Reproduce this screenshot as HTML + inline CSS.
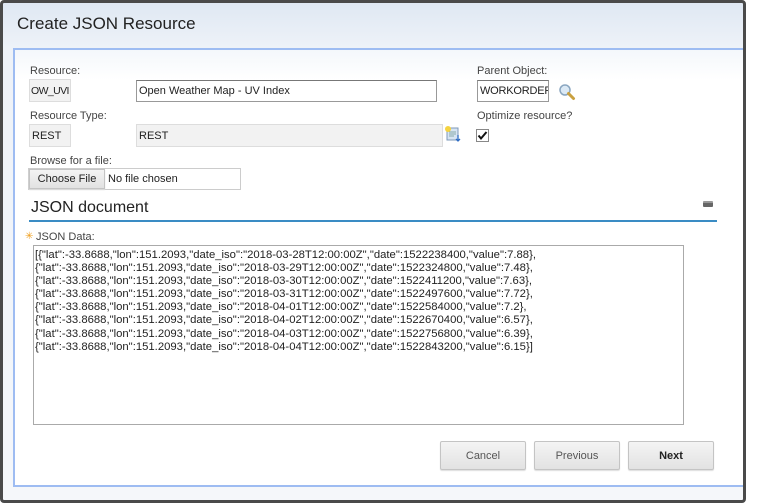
<!DOCTYPE html>
<html><head><meta charset="utf-8"><style>
*{box-sizing:border-box;margin:0;padding:0}
body{width:768px;height:503px;background:#fff;font-family:"Liberation Sans",Arial,sans-serif;color:#333;position:relative;overflow:hidden}
.a{position:absolute}
#dlg{left:0;top:0;width:746px;height:503px;border:3px solid #4a4a4a;border-radius:4px;background:linear-gradient(#dfe8f3,#eef2f8 45px,#f5f7fa);}
#panel{left:13px;top:48px;width:730px;height:439px;border:2px solid #9ebcf2;border-right:none;background:linear-gradient(#f4f7fb,#fff 30px)}
.lbl{font-size:11px;color:#444}
.in{font-size:11px;color:#222;border:1px solid #ddd;background:#f2f2f2;padding-left:2px;display:flex;align-items:center;white-space:nowrap;overflow:hidden}
.in2{background:#fff;border:1px solid #999;border-top-color:#777}
.btn{border:1px solid #c4c4c4;border-radius:2px;background:linear-gradient(#f4f4f4,#e2e2e2);font-size:11px;color:#555;display:flex;align-items:center;justify-content:center;box-shadow:0 1px 1px #ddd}
#ta{left:33px;top:245px;width:651px;height:180px;border:1px solid #aaa;background:#fff;font-size:11.3px;line-height:13.1px;color:#222;padding:3px 1px;white-space:pre;letter-spacing:0}
</style></head><body>
<div id="dlg" class="a"></div>
<div class="a" style="left:17px;top:14px;font-size:17px;color:#222">Create JSON Resource</div>
<div id="panel" class="a"></div>

<div class="a lbl" style="left:30px;top:65px">Resource:</div>
<div class="a in" style="left:29px;top:79px;width:42px;height:23px;padding-left:1px;font-size:10.5px;letter-spacing:-0.6px">OW_UVI</div>
<div class="a in in2" style="left:136px;top:80px;width:301px;height:22px">Open Weather Map - UV Index</div>
<div class="a lbl" style="left:477px;top:65px">Parent Object:</div>
<div class="a in in2" style="left:477px;top:80px;width:72px;height:22px;letter-spacing:-0.2px">WORKORDER</div>
<svg class="a" style="left:558px;top:83px" width="18" height="18" viewBox="0 0 18 18"><circle cx="7" cy="7" r="5" fill="#dbe9f5" stroke="#8aa6c0" stroke-width="1.5"/><path d="M10.5 10.5L15.5 15.5" stroke="#c9a040" stroke-width="3" stroke-linecap="round"/></svg>

<div class="a lbl" style="left:30px;top:110px">Resource Type:</div>
<div class="a in" style="left:29px;top:124px;width:42px;height:23px">REST</div>
<div class="a in" style="left:136px;top:124px;width:307px;height:23px">REST</div>
<svg class="a" style="left:444px;top:125px" width="18" height="18" viewBox="0 0 18 18"><rect x="3" y="3" width="11" height="12" fill="#d6e4f3" stroke="#7d98b8"/><path d="M5 7h7M5 9h7M5 11h5" stroke="#8aa" stroke-width="1"/><circle cx="4" cy="4" r="3" fill="#f5d340"/><path d="M14 10v6M12 14l2 2 2-2" stroke="#2d6bc4" stroke-width="1.3" fill="none"/></svg>
<div class="a lbl" style="left:477px;top:110px">Optimize resource?</div>
<div class="a" style="left:476px;top:129px;width:13px;height:13px;border:1px solid #888;background:#fff"><svg width="11" height="11" viewBox="0 0 11 11" style="display:block"><path d="M1.5 5.5L4 8.5L9.5 2" stroke="#111" stroke-width="2" fill="none"/></svg></div>

<div class="a lbl" style="left:30px;top:155px">Browse for a file:</div>
<div class="a" style="left:28px;top:168px;width:213px;height:22px;border:1px solid #ccc;background:#fff"></div>
<div class="a btn" style="left:29px;top:169px;width:76px;height:20px;color:#222;border-radius:0">Choose File</div>
<div class="a" style="left:108px;top:173px;font-size:11px;color:#222">No file chosen</div>

<div class="a" style="left:31px;top:199px;font-size:16px;color:#222">JSON document</div>
<div class="a" style="left:703px;top:201px;width:10px;height:6px;background:#666;border-radius:1px;border-top:2px solid #999"></div>
<div class="a" style="left:29px;top:220px;width:688px;height:1.5px;background:#3a8cc4"></div>

<div class="a" style="left:25px;top:231px;font-size:10px;color:#f0a020">✳</div>
<div class="a lbl" style="left:36px;top:231px">JSON Data:</div>
<div id="ta" class="a">[{"lat":-33.8688,"lon":151.2093,"date_iso":"2018-03-28T12:00:00Z","date":1522238400,"value":7.88},
{"lat":-33.8688,"lon":151.2093,"date_iso":"2018-03-29T12:00:00Z","date":1522324800,"value":7.48},
{"lat":-33.8688,"lon":151.2093,"date_iso":"2018-03-30T12:00:00Z","date":1522411200,"value":7.63},
{"lat":-33.8688,"lon":151.2093,"date_iso":"2018-03-31T12:00:00Z","date":1522497600,"value":7.72},
{"lat":-33.8688,"lon":151.2093,"date_iso":"2018-04-01T12:00:00Z","date":1522584000,"value":7.2},
{"lat":-33.8688,"lon":151.2093,"date_iso":"2018-04-02T12:00:00Z","date":1522670400,"value":6.57},
{"lat":-33.8688,"lon":151.2093,"date_iso":"2018-04-03T12:00:00Z","date":1522756800,"value":6.39},
{"lat":-33.8688,"lon":151.2093,"date_iso":"2018-04-04T12:00:00Z","date":1522843200,"value":6.15}]</div>

<div class="a btn" style="left:440px;top:441px;width:86px;height:29px">Cancel</div>
<div class="a btn" style="left:534px;top:441px;width:86px;height:29px">Previous</div>
<div class="a btn" style="left:628px;top:441px;width:86px;height:29px;color:#222;font-weight:bold">Next</div>
</body></html>
